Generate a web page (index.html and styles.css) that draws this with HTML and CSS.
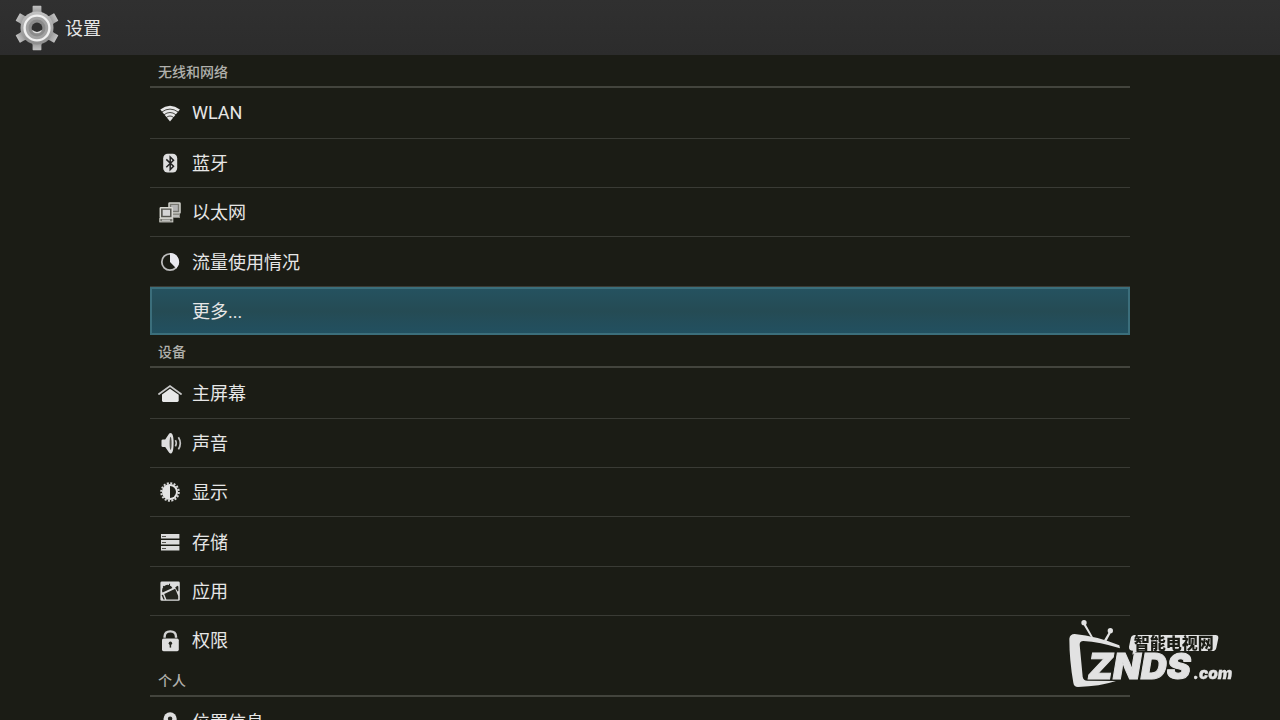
FILE: index.html
```html
<!DOCTYPE html>
<html lang="zh-CN">
<head>
    <meta charset="UTF-8">
    <meta name="viewport" content="width=device-width, initial-scale=1.0">
    <title>设置</title>
    <link rel="stylesheet" href="styles.css">
</head>
<body>
    <header class="Top-Bar">
        <svg class="Gear" viewBox="0 0 48 48" aria-hidden="true">
            <defs>
                <linearGradient id="Metal" x1="0" y1="0" x2="0" y2="1">
                    <stop offset="0" stop-color="#c2c2c2"/>
                    <stop offset="1" stop-color="#8c8c8c"/>
                </linearGradient>
                <path id="Tooth" d="M17 11 Q19.4 9.6 19.6 7 V2.4 Q19.6 1.8 20.2 1.8 H27.8 Q28.4 1.8 28.4 2.4 V7 Q28.6 9.6 31 11z"/>
            </defs>
            <g fill="url(#Metal)">
                <use href="#Tooth"/>
                <use href="#Tooth" transform="rotate(60 24 24)"/>
                <use href="#Tooth" transform="rotate(120 24 24)"/>
                <use href="#Tooth" transform="rotate(180 24 24)"/>
                <use href="#Tooth" transform="rotate(240 24 24)"/>
                <use href="#Tooth" transform="rotate(300 24 24)"/>
                <circle cx="24" cy="24" r="16.5"/>
            </g>
            <circle cx="24" cy="24" r="12.4" fill="#a2a2a2" stroke="#f0f0f0" stroke-width="2.4"/>
            <circle cx="24" cy="24" r="8.5" fill="#8b8b8b"/>
            <circle cx="24" cy="24" r="5.4" fill="#303030"/>
            <path d="M19 25.8 Q24 30 29 25.8 Q28 29.6 24 29.6 Q20 29.6 19 25.8z" fill="#ddd"/>
        </svg>
        <h1>设置</h1>
    </header>
    <main class="Settings">
        <section>
            <h2>无线和网络</h2>
            <ul>
                <li><a href="#wlan">
                    <svg class="Icon" viewBox="0 0 24 24" aria-hidden="true">
                        <path d="M2.3 8.4 Q12 1.2 21.9 8.4 L12 20.6z" fill="#e6e6e6"/>
                        <path d="M3.8 11 Q12 5.2 20.2 11 M5.9 13.8 Q12 9.2 18.1 13.8 M8.2 16.6 Q12 13.4 15.8 16.6" fill="none" stroke="#1b1c15" stroke-width=".8"/>
                    </svg>WLAN</a></li>
                <li><a href="#bluetooth">
                    <svg class="Icon" viewBox="0 0 24 24" aria-hidden="true">
                        <rect x="5.2" y="2.8" width="14" height="18.8" rx="4.5" fill="#dedede"/>
                        <path d="M8.3 8.4 L15.5 15.3 L12.2 18.6 V6 L15.5 9.2 L8.3 16.2" fill="none" stroke="#222" stroke-width="1.5"/>
                    </svg>蓝牙</a></li>
                <li><a href="#ethernet">
                    <svg class="Icon" viewBox="0 0 24 24" aria-hidden="true">
                        <path d="M14 14 H22 V18 H15z" fill="#8c8c84"/>
                        <path d="M14.5 16 H21" stroke="#d8d8d8" stroke-width="1.3"/>
                        <rect x="11" y="3" width="11" height="10" rx=".6" fill="#777770" stroke="#d2d2cc" stroke-width="1.5"/>
                        <rect x="13.2" y="5" width="6.6" height="5.8" fill="#b4b4b4"/>
                        <rect x="2.3" y="7.7" width="12" height="10.2" rx=".6" fill="#55554f" stroke="#d8d8d2" stroke-width="1.5"/>
                        <rect x="4.7" y="9.8" width="7.3" height="6" fill="#d5d5d5"/>
                        <rect x="1.8" y="18.5" width="13" height="3.4" fill="#777770" stroke="#d0d0ca" stroke-width="1"/>
                        <path d="M4 20.2 H12" stroke="#ddd" stroke-width="1"/>
                    </svg>以太网</a></li>
                <li><a href="#data">
                    <svg class="Icon" viewBox="0 0 24 24" aria-hidden="true">
                        <circle cx="12" cy="12" r="8.2" fill="none" stroke="#bcbcbc" stroke-width="1.8"/>
                        <path d="M12 12 V3 A9 9 0 0 1 18.4 18.4z" fill="#e8e8ee"/>
                    </svg>流量使用情况</a></li>
                <li><a href="#more" class="Selected"><span class="Icon"></span>更多...</a></li>
            </ul>
        </section>
        <section>
            <h2>设备</h2>
            <ul>
                <li><a href="#home">
                    <svg class="Icon" viewBox="0 0 24 24" aria-hidden="true">
                        <path d="M1 13 L12 5 L23 13" fill="none" stroke="#c8c8c8" stroke-width="1.8" stroke-linecap="round"/>
                        <path d="M4 13.6 L12 7.8 L20.7 13.8 V19.6 Q20.7 21 19.3 21 H5.2 Q4 21 4 19.6z" fill="#e8e8e8"/>
                    </svg>主屏幕</a></li>
                <li><a href="#sound">
                    <svg class="Icon" viewBox="0 0 24 24" aria-hidden="true">
                        <path d="M3.5 9.5 Q3.5 8.5 5 8.5 H7.2 L11.2 2.6 Q12.5 1.4 13.8 2.6 Q15.6 4.5 15.6 12 Q15.6 20 13.8 22 Q12.5 23.2 11.2 21.8 L7.2 16 H5 Q3.5 16 3.5 15z" fill="#dedede"/>
                        <ellipse cx="12.6" cy="12.3" rx="1" ry="6.5" fill="#4a4a44"/>
                        <path d="M17.4 9.2 Q19.2 12.3 17.4 15.4" fill="none" stroke="#c4c4c4" stroke-width="1.6"/>
                        <path d="M20.4 6.2 Q24.2 12.3 20.4 18.4" fill="none" stroke="#c4c4c4" stroke-width="1.7"/>
                    </svg>声音</a></li>
                <li><a href="#display">
                    <svg class="Icon" viewBox="0 0 24 24" aria-hidden="true">
                        <circle cx="12" cy="12" r="8.8" fill="none" stroke="#d8d8d8" stroke-width="2" stroke-dasharray="2 1.455"/>
                        <circle cx="12" cy="12" r="8" fill="#e4e4e4"/>
                        <path d="M12 6 A6 6 0 0 1 12 18z" fill="#1e1f18"/>
                    </svg>显示</a></li>
                <li><a href="#storage">
                    <svg class="Icon" viewBox="0 0 24 24" aria-hidden="true">
                        <path d="M3 4 H21.4 V8.5 H3z M3 10 H21.4 V14.5 H3z M3 16 H21.4 V20.5 H3z" fill="#dcdcdc"/>
                        <path d="M4 6.5 H8 M4 12.5 H8 M4 18.5 H8" stroke="#55554f" stroke-width="1.2"/>
                    </svg>存储</a></li>
                <li><a href="#apps">
                    <svg class="Icon" viewBox="0 0 24 24" aria-hidden="true">
                        <rect x="2.4" y="2.6" width="19.4" height="19.2" rx="1.4" fill="#dedede"/>
                        <path d="M4.6 13.6 A5.2 5.2 0 0 1 14.4 9z" fill="#24251f"/>
                        <path d="M5.2 7 L7.4 9.6 M11.6 4.8 L11.2 8" stroke="#24251f" stroke-width="1.1"/>
                        <path d="M6.2 15 L17.2 9.8 L20.2 17 V20.4 H8.4z" fill="#24251f"/>
                        <path d="M17.2 8.4 L19.4 6.8 L20.4 7.6 V12 L19.6 12.6z" fill="#24251f"/>
                        <path d="M3.6 16 L5 15.8 L6.8 20.4 H5.4z" fill="#24251f"/>
                    </svg>应用</a></li>
                <li><a href="#permissions">
                    <svg class="Icon" viewBox="0 0 24 24" aria-hidden="true">
                        <path d="M6.6 9.8 V8.6 Q6.8 3.4 12.3 3.4 Q17.8 3.4 18 8.6 V9.8" fill="none" stroke="#d2d2d2" stroke-width="2.4"/>
                        <rect x="4" y="10.6" width="16.8" height="12.6" rx="1.6" fill="#dedede"/>
                        <circle cx="12.4" cy="15.2" r="1.7" fill="#24251f"/>
                        <path d="M12.4 15 V19.6" stroke="#24251f" stroke-width="1.5"/>
                    </svg>权限</a></li>
            </ul>
        </section>
        <section>
            <h2>个人</h2>
            <ul>
                <li><a href="#location">
                    <svg class="Icon" viewBox="0 0 24 24" aria-hidden="true">
                        <path d="M12 23 Q5.5 14 5.5 8.8 A6.6 6.6 0 0 1 18.7 8.8 Q18.7 14 12 23z" fill="#dedede"/>
                        <circle cx="12.1" cy="8.6" r="2.2" fill="#24251f"/>
                    </svg>位置信息</a></li>
            </ul>
        </section>
    </main>
    <svg class="Watermark" viewBox="0 0 600 270" role="img" aria-label="智能电视网 ZNDS.com">
        <g fill="#e2e2e2">
            <circle cx="102" cy="38" r="8"/>
            <circle cx="181" cy="62" r="8"/>
            <path d="M99 42 L105 39 L129 82 L122 80z M178 64 L184 66 L169 94 L162 91z"/>
            <path fill-rule="evenodd" d="M58 86 Q60 72 74 72 Q140 78 208 106 L210 115 Q150 96 100 93 Q89 93 89 104 L98 200 Q100 212 112 212 L198 213 Q150 229 84 231 Q72 231 70 218 Q58 150 58 86z"/>
            <path d="M254 75 H496 Q506 75 505 85 L499 113 Q497 123 487 123 H262 L247 134 L249 122 Q236 122 237 110 L242 86 Q244 75 254 75z"/>
        </g>
        <text class="Site-Label" x="251" y="116">智能电视网</text>
        <text class="Site-Name" x="114" y="207">ZNDS</text>
        <text class="Site-Domain" x="430" y="207">.com</text>
    </svg>
</body>
</html>
```
FILE: styles.css
```css
*{
    box-sizing: border-box;
    padding: 0;
    margin: 0;
}
body{
    height: 100vh;
    overflow: hidden;
    background-color: #1b1c15;
    color: #e6e6e6;
    font-family: Roboto, "Noto Sans CJK SC", sans-serif;
}
.Top-Bar{
    height: 55px;
    padding-left: 13px;
    display: flex;
    align-items: center;
    gap: 4px;
    background: linear-gradient(#303030, #2c2c2c);
}
.Top-Bar h1{
    padding-bottom: 2px;
    font-size: 18px;
    font-weight: 400;
}
.Gear{
    width: 48px;
    height: 48px;
}
.Settings{
    margin: 0 150px;
}
.Settings h2{
    height: 33px;
    padding-left: 8px;
    border-bottom: 2px solid #43443d;
    color: #b0b0ac;
    font-size: 14px;
    font-weight: 500;
    line-height: 35px;
}
.Settings ul{
    list-style: none;
}
.Settings li{
    height: 49px;
    border-top: 1px solid #3a3b35;
}
.Settings li:nth-child(3n+1){
    height: 50px;
}
.Settings li:first-child{
    border-top: none;
}
.Settings li a{
    height: 100%;
    padding: 0 8px 2px;
    display: flex;
    align-items: center;
    gap: 10px;
    color: #e6e6e6;
    font-size: 18px;
    text-decoration: none;
}
.Settings li a.Selected{
    padding: 0 6px 2px;
    border: 2px solid #3b6e7b;
    background: linear-gradient(#25525f, #254b54 50%, #225060);
}
.Icon{
    width: 24px;
    height: 24px;
    margin-top: 2px;
    flex-shrink: 0;
}
.Watermark{
    position: fixed;
    right: 30px;
    bottom: 20px;
    width: 200px;
    height: 90px;
}
.Site-Label{
    fill: #1b1c15;
    font-family: "Noto Sans CJK SC", sans-serif;
    font-size: 48px;
    font-weight: 900;
}
.Site-Name{
    fill: #e2e2e2;
    stroke: #e2e2e2;
    stroke-width: 3px;
    font-family: Inter, sans-serif;
    font-size: 108px;
    font-weight: 900;
    font-style: italic;
}
.Site-Domain{
    fill: #e2e2e2;
    stroke: #e2e2e2;
    stroke-width: 1px;
    font-family: Inter, sans-serif;
    font-size: 46px;
    font-weight: 900;
    font-style: italic;
}
```
